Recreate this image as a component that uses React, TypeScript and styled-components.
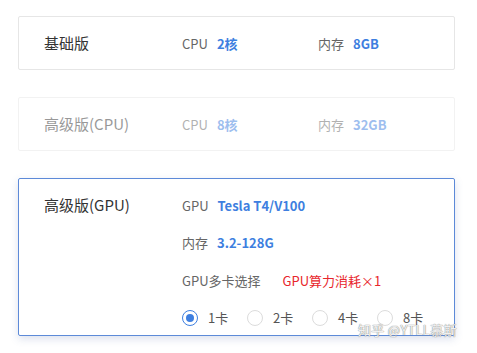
import React from "react";
import styled, { createGlobalStyle } from "styled-components";

const GlobalStyle = createGlobalStyle`
  body {
    margin: 0;
    background: #fff;
    font-family: "Noto Sans CJK SC", "Noto Sans", sans-serif;
    font-size: 14px;
  }
`;

const Page = styled.div`
  position: relative;
  width: 477px;
  height: 353px;
  padding: 16px 22px 0 18px;
  box-sizing: border-box;
  display: flex;
  flex-direction: column;
  gap: 27px;
  overflow: hidden;
`;

const Card = styled.div<{ $active?: boolean; $muted?: boolean }>`
  box-sizing: border-box;
  border: 1px solid ${(p) => (p.$active ? "#5d8ad8" : "#e6e6e6")};
  border-radius: 2px;
  box-shadow: ${(p) => (p.$active ? "0 3px 8px rgba(60, 90, 160, 0.18)" : "none")};
  padding: ${(p) => (p.$active ? "15px 0 10px 25px" : "0 0 0 25px")};
  height: ${(p) => (p.$active ? "158px" : "54px")};
  display: flex;
  align-items: ${(p) => (p.$active ? "flex-start" : "center")};
  opacity: ${(p) => (p.$muted ? 0.5 : 1)};
`;

const Title = styled.div`
  width: 138px;
  flex-shrink: 0;
  color: #333;
  font-size: 15px;
  line-height: 22px;
`;

const Specs = styled.div`
  display: flex;
  flex-direction: column;
  gap: 15.5px;
`;

const Row = styled.div`
  display: flex;
  align-items: center;
  height: 22px;
`;

const Spec = styled.div<{ $width?: number }>`
  display: flex;
  align-items: center;
  gap: 9px;
  width: ${(p) => (p.$width ? `${p.$width}px` : "auto")};
`;

const Label = styled.span`
  color: #666;
  font-size: 13px;
`;

const Value = styled.span`
  color: #3e7fe0;
  font-weight: 600;
  font-size: 13px;
`;

const Warn = styled.span`
  color: #e8262c;
  font-size: 13px;
  margin-left: 22px;
`;

const Radios = styled.div`
  display: flex;
  align-items: center;
`;

const RadioItem = styled.label`
  display: flex;
  align-items: center;
  gap: 10px;
  width: 65px;
  color: #555;
  font-size: 13px;
`;

const Dot = styled.span<{ $on?: boolean }>`
  width: 16px;
  height: 16px;
  box-sizing: border-box;
  border-radius: 50%;
  border: 1px solid ${(p) => (p.$on ? "#3e7fe0" : "#dcdcdc")};
  display: flex;
  align-items: center;
  justify-content: center;
  &::after {
    content: "";
    width: 8px;
    height: 8px;
    border-radius: 50%;
    background: ${(p) => (p.$on ? "#3e7fe0" : "transparent")};
  }
`;

const Watermark = styled.div`
  position: absolute;
  left: 358px;
  top: 320px;
  color: rgba(255, 255, 255, 0.9);
  font-size: 13px;
  letter-spacing: 0.3px;
  text-shadow: 0 0 1px #888, 0 0 1px #888;
`;

const cards = [
  { name: "基础版", cpu: "2核", mem: "8GB", muted: false },
  { name: "高级版(CPU)", cpu: "8核", mem: "32GB", muted: true },
];

const App = () => {
  return (
    <Page>
      <GlobalStyle />
      {cards.map((c) => (
        <Card key={c.name} $muted={c.muted}>
          <Title>{c.name}</Title>
          <Row>
            <Spec $width={136}>
              <Label>CPU</Label>
              <Value>{c.cpu}</Value>
            </Spec>
            <Spec>
              <Label>内存</Label>
              <Value>{c.mem}</Value>
            </Spec>
          </Row>
        </Card>
      ))}
      <Card $active>
        <Title>高级版(GPU)</Title>
        <Specs>
          <Row>
            <Spec>
              <Label>GPU</Label>
              <Value>Tesla T4/V100</Value>
            </Spec>
          </Row>
          <Row>
            <Spec>
              <Label>内存</Label>
              <Value>3.2-128G</Value>
            </Spec>
          </Row>
          <Row>
            <Label>GPU多卡选择</Label>
            <Warn>GPU算力消耗×1</Warn>
          </Row>
          <Row>
            <Radios>
              {["1卡", "2卡", "4卡", "8卡"].map((r, i) => (
                <RadioItem key={r}>
                  <Dot $on={i === 0} />
                  {r}
                </RadioItem>
              ))}
            </Radios>
          </Row>
        </Specs>
      </Card>
      <Watermark>知乎 @YTLL慕斯</Watermark>
    </Page>
  );
};

export default App;
